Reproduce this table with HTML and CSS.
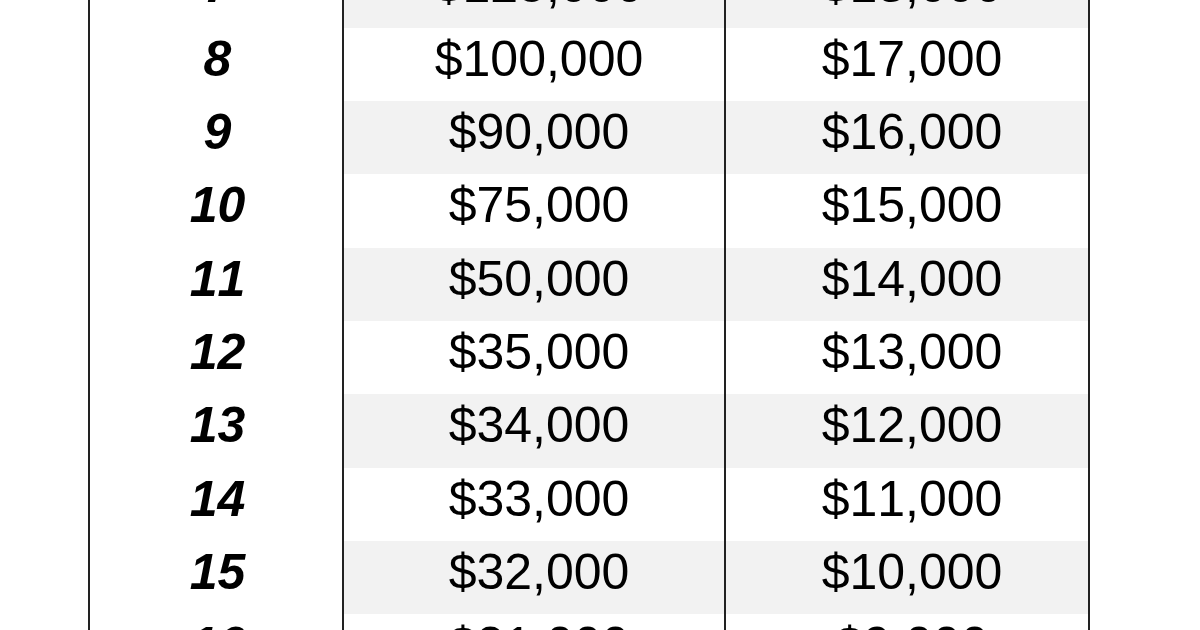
FILE: index.html
```html
<!DOCTYPE html>
<html lang="en">
<head>
<meta charset="utf-8">
<title>Prize table</title>
<link rel="stylesheet" href="styles.css">
</head>
<body>
<div class="table">
  <div class="row alt"><div class="cell num">7</div><div class="cell">$125,000</div><div class="cell">$18,000</div></div>
  <div class="row"><div class="cell num">8</div><div class="cell">$100,000</div><div class="cell">$17,000</div></div>
  <div class="row alt"><div class="cell num">9</div><div class="cell">$90,000</div><div class="cell">$16,000</div></div>
  <div class="row"><div class="cell num">10</div><div class="cell">$75,000</div><div class="cell">$15,000</div></div>
  <div class="row alt"><div class="cell num">11</div><div class="cell">$50,000</div><div class="cell">$14,000</div></div>
  <div class="row"><div class="cell num">12</div><div class="cell">$35,000</div><div class="cell">$13,000</div></div>
  <div class="row alt"><div class="cell num">13</div><div class="cell">$34,000</div><div class="cell">$12,000</div></div>
  <div class="row"><div class="cell num">14</div><div class="cell">$33,000</div><div class="cell">$11,000</div></div>
  <div class="row alt"><div class="cell num">15</div><div class="cell">$32,000</div><div class="cell">$10,000</div></div>
  <div class="row"><div class="cell num">16</div><div class="cell">$31,000</div><div class="cell">$9,000</div></div>
</div>
</body>
</html>
```
FILE: styles.css
```css
html, body {
  margin: 0;
  padding: 0;
  background: #ffffff;
  overflow: hidden;
  height: 630px;
}
.table {
  margin-top: -45.67px;
  margin-left: 88px;
  width: 1002px;
  font-family: "Liberation Sans", Arial, sans-serif;
  font-kerning: none;
  color: #000;
}
.row {
  display: grid;
  grid-template-columns: 254px 382px 366px;
  height: 73.33px;
}
.cell {
  box-sizing: border-box;
  height: 73.33px;
  border-left: 2px solid #222222;
  font-size: 50px;
  line-height: 63.33px;
  padding-bottom: 10px;
  padding-left: 10px;
  text-align: center;
  white-space: nowrap;
}
.cell:last-child {
  border-right: 2px solid #222222;
}
.cell.num {
  font-weight: bold;
  font-style: italic;
  padding-left: 3px;
}
.row.alt .cell:not(.num) {
  background: #f2f2f2;
}
```
